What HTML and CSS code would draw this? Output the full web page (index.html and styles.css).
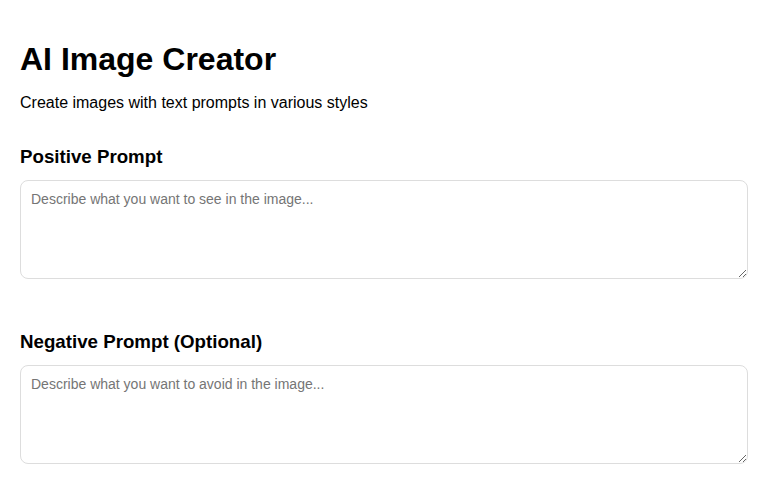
FILE: index.html
```html
<!DOCTYPE html>
<html>
<head>
    <title>AI Image Creator</title>
    <link rel="stylesheet" href="styles.css">
</head>
<body>
    <div id="creator">
        <h1 class="title">AI Image Creator</h1>
        <p class="subtitle">Create images with text prompts in various styles</p>

        <div class="field">
            <label class="field-label" for="positive">Positive Prompt</label>
            <textarea id="positive" class="prompt" placeholder="Describe what you want to see in the image..."></textarea>
        </div>

        <div class="field">
            <label class="field-label" for="negative">Negative Prompt (Optional)</label>
            <textarea id="negative" class="prompt" placeholder="Describe what you want to avoid in the image..."></textarea>
        </div>
    </div>
</body>
</html>
```

FILE: styles.css
```css
body {
    font-family: "Liberation Sans", Arial, sans-serif;
    margin: 0;
    background-color: #ffffff;
    color: #000000;
}

#creator {
    padding: 41px 20px 20px;
}

.title {
    font-size: 32px;
    line-height: 37px;
    font-weight: bold;
    margin: 0 0 16px;
}

.subtitle {
    font-size: 16px;
    line-height: 18px;
    margin: 0 0 34px;
}

.field {
    margin-bottom: 52px;
}

.field-label {
    display: block;
    font-size: 18.72px;
    line-height: 22px;
    font-weight: bold;
    margin-bottom: 12px;
}

.prompt {
    display: block;
    box-sizing: border-box;
    width: 100%;
    height: 99px;
    padding: 10px;
    border: 1px solid #dddddd;
    border-radius: 8px;
    font-family: "Liberation Sans", Arial, sans-serif;
    font-size: 14px;
    line-height: 16px;
    resize: vertical;
}

.prompt::placeholder {
    color: #757575;
}
```
